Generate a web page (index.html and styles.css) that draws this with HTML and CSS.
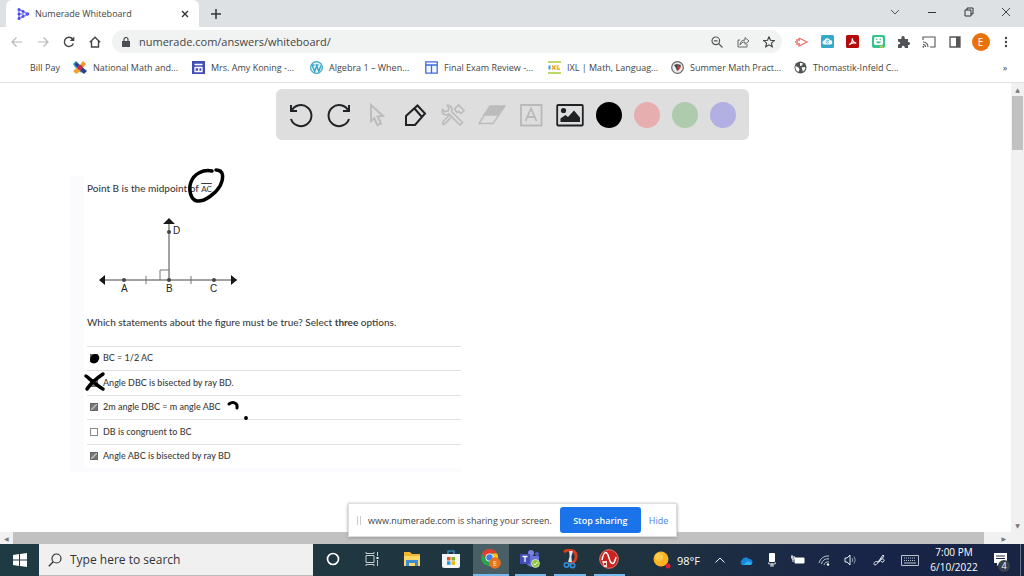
FILE: index.html
```
<!DOCTYPE html>
<html lang="en">
<head>
    <meta charset="UTF-8">
    <meta name="viewport" content="width=device-width, initial-scale=1.0">
    <title>Numerade Whiteboard</title>
    <link rel="stylesheet" href="styles.css">
</head>
<body>
    <header class="browser">
        <div class="tabs">
            <div class="tab">
                <svg width="14" height="14" viewBox="0 0 14 14"><path d="M3 2v10M3 2.500l4 2 5 2.500-5 2.500-4 2M3 7h5" fill="none" stroke="#8585f5" stroke-width="1.500"/><g fill="#5050ee"><circle cx="3" cy="2.500" r="1.500"/><circle cx="3" cy="7" r="1.500"/><circle cx="3" cy="11.500" r="1.500"/><circle cx="7" cy="4.500" r="1.400"/><circle cx="7" cy="9.500" r="1.400"/><circle cx="11.500" cy="7" r="1.700"/></g></svg>
                <span class="tab-title">Numerade Whiteboard</span>
                <button class="icon" aria-label="Close tab"><svg width="8" height="8" viewBox="0 0 8 8"><path d="M1 1l6 6M7 1L1 7" stroke="#333" stroke-width="1.4"/></svg></button>
            </div>
            <button class="icon new-tab" aria-label="New tab"><svg width="10" height="10" viewBox="0 0 10 10"><path d="M5 0v10M0 5h10" stroke="#333" stroke-width="1.5"/></svg></button>
            <div class="window-buttons">
                <button class="icon" aria-label="Search tabs"><svg width="10" height="10" viewBox="0 0 10 10"><path d="M1 3l4 4 4-4" fill="none" stroke="#555"/></svg></button>
                <button class="icon" aria-label="Minimize"><svg width="10" height="10" viewBox="0 0 10 10"><path d="M1 5.5h8" stroke="#333"/></svg></button>
                <button class="icon" aria-label="Restore"><svg width="10" height="10" viewBox="0 0 10 10"><path d="M1 3h6v6H1zM3 3V1h6v6H7" fill="none" stroke="#333"/></svg></button>
                <button class="icon" aria-label="Close"><svg width="10" height="10" viewBox="0 0 10 10"><path d="M1 1l8 8M9 1L1 9" stroke="#444"/></svg></button>
            </div>
        </div>

        <div class="toolbar">
            <div class="nav">
                <button class="icon" aria-label="Back"><svg width="12" height="12" viewBox="0 0 12 12"><path d="M11 6H1.500M5.500 1.500L1 6l4.500 4.500" fill="none" stroke="#b5b7ba" stroke-width="1.200"/></svg></button>
                <button class="icon" aria-label="Forward"><svg width="12" height="12" viewBox="0 0 12 12"><path d="M1 6h9.500M6.500 1.500L11 6l-4.500 4.500" fill="none" stroke="#b5b7ba" stroke-width="1.200"/></svg></button>
                <button class="icon" aria-label="Reload"><svg width="12" height="12" viewBox="0 0 12 12"><path d="M10.300 7.500A4.600 4.600 0 1 1 9.600 3" fill="none" stroke="#444" stroke-width="1.400"/><path d="M11.300.5v4.500H6.800z" fill="#444"/></svg></button>
                <button class="icon" aria-label="Home"><svg width="12" height="12" viewBox="0 0 12 12"><path d="M.8 6.200L6 1.200l5.200 5M2.500 5v6h7V5" fill="none" stroke="#444" stroke-width="1.400"/></svg></button>
            </div>
            <div class="address">
                <svg width="8" height="10" viewBox="0 0 8 10"><path d="M0 4h8v6H0z" fill="#4a4d51"/><path d="M2 4V2.500a2 2 0 0 1 4 0V4" fill="none" stroke="#4a4d51" stroke-width="1.200"/></svg>
                <input type="text" aria-label="Address" value="numerade.com/answers/whiteboard/">
                <div class="actions">
                    <button class="icon" aria-label="Zoom"><svg width="12" height="12" viewBox="0 0 12 12"><circle cx="4.800" cy="4.800" r="3.800" fill="none" stroke="#555" stroke-width="1.200"/><path d="M7.600 7.600L11.500 11.500M3 4.800h3.600" stroke="#555" stroke-width="1.300"/></svg></button>
                    <button class="icon" aria-label="Share"><svg width="13" height="12" viewBox="0 0 13 12"><path d="M3 4H1v7h9V8M3 9c.3-3.500 2-5 5-5V1.500L12 5 8 8.300V6C5.500 6 4 7 3 9z" fill="none" stroke="#666"/></svg></button>
                    <button class="icon" aria-label="Bookmark this page"><svg width="12" height="12" viewBox="0 0 12 12"><path d="M6 .8l1.500 3.500 3.800.3-2.900 2.500.9 3.700L6 8.800l-3.300 2 .9-3.700L.7 4.600l3.800-.3z" fill="none" stroke="#444" stroke-width="1.100"/></svg></button>
                </div>
            </div>
            <div class="extensions">
                <button class="icon" aria-label="Screencastify"><svg width="13" height="12" viewBox="0 0 13 12"><path d="M4 2l8 4-8 4V8M4 2v2M1 4h4M1 8h4M0 6h3" fill="none" stroke="#f07068" stroke-width="1.300"/></svg></button>
                <button class="icon" aria-label="Cloud"><svg width="13" height="13" viewBox="0 0 13 13"><rect width="13" height="13" rx="1.500" fill="#36a9c9"/><path d="M3.500 9.500a2 2 0 0 1-.2-4A3 3 0 0 1 9 5a2.300 2.300 0 0 1 .7 4.500z" fill="#fff"/><path d="M7.800 7.500a1.500 1.500 0 1 1 0-1.500H6" fill="none" stroke="#36a9c9" stroke-width=".8"/></svg></button>
                <button class="icon" aria-label="Acrobat"><svg width="13" height="13" viewBox="0 0 13 13"><rect width="13" height="13" rx="1.500" fill="#b30b0b"/><path d="M3 9.800c2-.8 3.500-3.500 3.300-6.500.3 3 2 4.500 4 4.800C7.500 7.500 5 8 3 9.800z" fill="none" stroke="#fff" stroke-width="1.100"/></svg></button>
                <button class="icon" aria-label="Bitmoji"><svg width="13" height="13" viewBox="0 0 13 13"><rect width="13" height="13" rx="2" fill="#35c48b"/><rect x="2" y="2" width="9" height="8" rx="1.500" fill="#fff"/><path d="M4.800 3.500v1.500M8.200 3.500v1.500" stroke="#35a878"/><path d="M4 6.500h5c-.5 2.500-4.500 2.500-5 0z" fill="#35c48b"/><path d="M7 12l3-2 1 3z" fill="#f1bf35"/></svg></button>
                <button class="icon" aria-label="Extensions"><svg width="13" height="13" viewBox="0 0 13 13"><path d="M1 4h3.500C3.500 0 8.500 0 7.700 4H11v3c3 0 3 3.200 0 3.200V13H7.800c0-3-3.200-3-3.200 0H1V9.500c3 0 3-2.800 0-2.800z" fill="#505357"/></svg></button>
                <button class="icon" aria-label="Cast"><svg width="14" height="12" viewBox="0 0 14 12"><path d="M1 4V1h12v10H8M1 6c3 0 5 2 5 5M1 8.500c1.500 0 2.500 1 2.500 2.500" fill="none" stroke="#555" stroke-width="1.100"/><circle cx="1.300" cy="10.800" r=".9" fill="#555"/></svg></button>
                <button class="icon" aria-label="Side panel"><svg width="12" height="12" viewBox="0 0 12 12"><path d="M1 1h10v10H1z" fill="none" stroke="#555" stroke-width="1.300"/><path d="M7 1h4v10H7z" fill="#555"/></svg></button>
                <button class="icon profile" aria-label="Profile">E</button>
                <button class="icon" aria-label="Menu"><svg width="4" height="12" viewBox="0 0 4 12" fill="#444"><circle cx="2" cy="2" r="1.200"/><circle cx="2" cy="6" r="1.200"/><circle cx="2" cy="10" r="1.200"/></svg></button>
            </div>
        </div>

        <nav class="bookmarks">
            <a href="#">Bill Pay</a>
            <a href="#"><svg width="14" height="13" viewBox="0 0 14 13"><path d="M0 3l3-3 4 4 3 8-3-1-5-5z" fill="#2b91c7"/><path d="M7 4l3-4 3 3-4 5z" fill="#f59a23"/><path d="M0 10l5-4 3 4-5 3z" fill="#f2a32c"/><path d="M3 1l11 9-3 3L2 4z" fill="#2a3f90"/><circle cx="7" cy="6.500" r="2.500" fill="#c12c55"/></svg>National Math and...</a>
            <a href="#"><svg width="13" height="13" viewBox="0 0 13 13"><rect width="13" height="13" fill="#3f4db5"/><path d="M2.500 3.500h8M3 6.500h7M3 6v4.500h7V6M6.800 6v4.500" fill="none" stroke="#fff" stroke-width="1.300"/></svg>Mrs. Amy Koning -...</a>
            <a href="#"><svg width="13" height="13" viewBox="0 0 13 13"><circle cx="6.500" cy="6.500" r="5.900" fill="#e3f4f9" stroke="#3aa5c8" stroke-width="1.200"/><path d="M2 4l2.700 6.500 2-5.500 2.200 5.500 2-6M1.500 4h3M5.500 4h3" fill="none" stroke="#3aa5c8" stroke-width="1.400"/></svg>Algebra 1 – When...</a>
            <a href="#"><svg width="13" height="13" viewBox="0 0 13 13"><path d="M.8.800h11.400v11.400H.8zM1 4h11M6.500 4v8" fill="#f4f7ff" stroke="#3c6ce0" stroke-width="1.300"/></svg>Final Exam Review -...</a>
            <a href="#"><svg width="13" height="13" viewBox="0 0 13 13"><path d="M0 1h13M0 12h13" stroke="#a5ce39" stroke-width="1.400"/><path d="M1.500 4.500v4" stroke="#2b9fd6" stroke-width="2"/><path d="M4 4.500l3.500 4M7.500 4.500L4 8.500" stroke="#f2a51d" stroke-width="1.500"/><path d="M9.500 4v4.200H12" fill="none" stroke="#efbf17" stroke-width="1.700"/></svg>IXL | Math, Languag...</a>
            <a href="#"><svg width="13" height="13" viewBox="0 0 13 13"><circle cx="6.500" cy="6.500" r="5.800" fill="#eee" stroke="#666" stroke-width="1.200"/><path d="M3 4l3-1 4 1-1 3-3 3-1-3z" fill="#444"/><path d="M6 4l4 2-3 4z" fill="#c04747"/></svg>Summer Math Pract...</a>
            <a href="#"><svg width="13" height="13" viewBox="0 0 13 13"><circle cx="6.500" cy="6.500" r="6" fill="#505357"/><path d="M1.500 5l3 1.500 1 2-1 2.500C2 10 1 7.500 1.500 5zM6 2l3 .3-1 2.200-2 .5zM7.500 6.500l3.500-.5.3 2-2.300 2.700z" fill="#fff"/></svg>Thomastik-Infeld C...</a>
            <button class="icon more" aria-label="More bookmarks">»</button>
        </nav>
    </header>

    <main class="page">
        <div class="content">
            <div class="tools">
                <button class="icon" aria-label="Undo"><svg width="26" height="26" viewBox="0 0 26 26"><path d="M3 3v6h6M3.500 9A10.500 10.500 0 1 1 3 17" fill="none" stroke="#202326" stroke-width="2"/></svg></button>
                <button class="icon" aria-label="Redo"><svg width="26" height="26" viewBox="0 0 26 26"><path d="M23 3v6h-6M22.500 9A10.500 10.500 0 1 0 23 17" fill="none" stroke="#202326" stroke-width="2"/></svg></button>
                <button class="icon" aria-label="Select"><svg width="26" height="26" viewBox="0 0 26 26"><path d="M7 3l12 11-5.500.5 3.500 7-3.500 1.700-3.300-7L7 19z" fill="none" stroke="#bcbcbc" stroke-width="2"/></svg></button>
                <button class="icon" aria-label="Pen"><svg width="26" height="26" viewBox="0 0 26 26"><path d="M4 23v-9L15.500 3.500l7.500 8L13 23zM12.500 6.500l7 8" fill="none" stroke="#202326" stroke-width="2"/></svg></button>
                <button class="icon" aria-label="Shapes"><svg width="26" height="26" viewBox="0 0 26 26"><path d="M7 3.500L9 6 8 9 5 9.500 2.500 7.500C1 12 6 14 9 12l11 11 2.500-2.500L11.500 9.500C13 6 10.500 3 7 3.500zM14.500 7l4-4 5.500 5.500-3 3-2-2-2 1zM12 14.500L4 22.500M10 12.500l-7 7 0 3.500" fill="none" stroke="#bcbcbc" stroke-width="1.700"/></svg></button>
                <button class="icon" aria-label="Eraser"><svg width="28" height="26" viewBox="0 0 28 26"><path d="M12 4h15l-7 9H5z" fill="#bcbcbc"/><path d="M12 4h15L15 21.500H1zM5 13h15" fill="none" stroke="#bcbcbc" stroke-width="1.500"/></svg></button>
                <button class="icon" aria-label="Text"><svg width="26" height="26" viewBox="0 0 26 26"><path d="M3 3h20.500v20.500H3zM7.500 19L13 6.500 18.500 19M9.500 15h7" fill="none" stroke="#b9b9b9" stroke-width="1.800"/></svg></button>
                <button class="icon" aria-label="Image"><svg width="28" height="26" viewBox="0 0 28 26"><rect x="1.200" y="3" width="25.600" height="20.500" rx="1" fill="none" stroke="#202326" stroke-width="1.800"/><circle cx="7.500" cy="8.500" r="2.600" fill="#202326"/><path d="M4.500 20v-3.500l5-3.500 2.500 2 6-6.500 6 7V20z" fill="#202326"/></svg></button>
                <button class="swatch black" aria-label="Black"></button>
                <button class="swatch red" aria-label="Red"></button>
                <button class="swatch green" aria-label="Green"></button>
                <button class="swatch blue" aria-label="Blue"></button>
            </div>

            <section class="question">
                <p>Point B is the midpoint of <span class="segment">AC</span></p>
                <svg class="figure" width="150" height="84" viewBox="0 0 150 84">
                    <path d="M14 67h136M82 67V8" stroke="#444" fill="none"/>
                    <path d="M73 67V57h9M59 63v8M104 63v8" stroke="#777" fill="none"/>
                    <path d="M12 67l6-5v10zM150 67l-6-5v10zM82 5l-6 6h12z" fill="#181818"/>
                    <g fill="#444"><circle cx="37" cy="67" r="2"/><circle cx="82" cy="67" r="2"/><circle cx="127" cy="67" r="2"/><circle cx="82" cy="19" r="2"/></g>
                    <g class="labels"><text x="34" y="79">A</text><text x="79" y="79">B</text><text x="123" y="79">C</text><text x="86" y="21">D</text></g>
                </svg>
                <p>Which statements about the figure must be true? Select <b>three</b> options.</p>
                <ul class="options">
                    <li><label><input type="checkbox" checked>BC = 1/2 AC</label></li>
                    <li><label><input type="checkbox" checked>Angle DBC is bisected by ray BD.</label></li>
                    <li><label><input type="checkbox" checked>2m angle DBC = m angle ABC</label></li>
                    <li><label><input type="checkbox">DB is congruent to BC</label></li>
                    <li><label><input type="checkbox" checked>Angle ABC is bisected by ray BD</label></li>
                </ul>
                <!-- pen strokes -->
                <svg class="ink" width="391" height="310" viewBox="70 160 391 310" fill="none" stroke="#000" stroke-width="3.500" stroke-linecap="round">
                    <path d="M212 171c-9-2-18 3-21 11-3 8 0 18 6 19 8 1 19-8 23-15 4-8 4-16-4-16"/>
                    <path d="M86 376c5 4 12 10 17 13M103 374c-6 4-12 9-16 15"/>
                    <path d="M91 360c0-3 2-5 4-5 4 0 4 4 2 6-2 2-6 2-6-1z" fill="#000" stroke-width="2"/>
                    <path d="M229 404c4-3 9-1 8 4" stroke-width="3"/>
                    <circle cx="246" cy="418" r="1.200" stroke-width="1.500" fill="#000"/>
                </svg>
            </section>
        </div>
        <div class="scroll-y"><span>▲</span><i></i><span>▼</span></div>
        <div class="scroll-x"><span>◀</span><i></i><span>▶</span></div>

        <div class="sharing">
            <span class="grip"></span>
            <span>www.numerade.com is sharing your screen.</span>
            <button class="stop">Stop sharing</button>
            <a href="#">Hide</a>
        </div>
    </main>

    <footer class="taskbar">
        <button class="icon start" aria-label="Start"><svg width="14" height="14" viewBox="0 0 14 14"><path d="M0 2l6-.9v5.500H0zM7 1l7-1v6.600H7zM0 7.400h6v5.500L0 12zM7 7.400h7V14l-7-1z" fill="#fff"/></svg></button>
        <label class="search">
            <svg width="14" height="14" viewBox="0 0 14 14"><circle cx="8.500" cy="5.500" r="4.500" fill="none" stroke="#333" stroke-width="1.200"/><path d="M5.200 8.800L.8 13.200" stroke="#333" stroke-width="1.300"/></svg>
            <input type="text" placeholder="Type here to search" aria-label="Search">
        </label>
        <div class="apps">
            <button class="icon" aria-label="Cortana"><svg width="14" height="14" viewBox="0 0 14 14"><circle cx="7" cy="7" r="5.500" fill="none" stroke="#fff" stroke-width="1.700"/></svg></button>
            <button class="icon" aria-label="Task view"><svg width="15" height="14" viewBox="0 0 15 14"><path d="M1 3.500h8v7H1zM1 0v1.500h8V0M1 14v-1.500h8V14M12.500 0v4M12.500 8v6" fill="none" stroke="#c4cccf"/><path d="M11.500 5h2v2h-2z" fill="#fff"/></svg></button>
            <button class="icon" aria-label="File Explorer"><svg width="18" height="16" viewBox="0 0 18 16"><path d="M1 1h6l2 2h8v12H1z" fill="#f3b72f"/><path d="M1 5h16v10H1z" fill="#fbd868"/><path d="M3 15V9h12v6h-3v-3H6v3z" fill="#3f8bd3"/></svg></button>
            <button class="icon" aria-label="Store"><svg width="18" height="18" viewBox="0 0 18 18"><path d="M6 4V1h6v3" fill="none" stroke="#37a6dc" stroke-width="1.200"/><path d="M0 4h18v12q0 2-2 2H2q-2 0-2-2z" fill="#f4f5f6"/><path d="M5 7h3.500v3.500H5z" fill="#ea4e25"/><path d="M9.500 7H13v3.500H9.500z" fill="#78b41f"/><path d="M5 11.300h3.500v3.500H5z" fill="#1c9fe5"/><path d="M9.500 11.300H13v3.500H9.500z" fill="#f4b400"/></svg></button>
            <button class="icon open active" aria-label="Chrome"><svg width="20" height="20" viewBox="0 0 20 20"><circle cx="8.500" cy="8.500" r="8.500" fill="#2ba24c"/><path d="M1 4.500A8.500 8.500 0 0 1 16 4.500H8.500L5 10z" fill="#e33b2e"/><path d="M16 4.500A8.500 8.500 0 0 1 8 17l4.500-7-1-5.500z" fill="#fbc116"/><circle cx="8.500" cy="8.500" r="4" fill="#fff"/><circle cx="8.500" cy="8.500" r="3.200" fill="#3d7de8"/><circle cx="14" cy="14" r="5.800" fill="#e8711c"/><text x="12" y="17" class="badge-letter">E</text></svg></button>
            <button class="icon open" aria-label="Teams"><svg width="20" height="18" viewBox="0 0 20 18"><circle cx="11" cy="3" r="3" fill="#7b83eb"/><circle cx="17" cy="4" r="2" fill="#5059c9"/><path d="M6 6h13v6q-2 5-6 5-7 0-7-7z" fill="#6b72d8"/><path d="M0 4h10v10H0z" fill="#454eb8"/><path d="M2.500 6.500h5M5 6.500v5.500" stroke="#fff" stroke-width="1.300"/><circle cx="15.500" cy="13.500" r="4" fill="#8cc63e" stroke="#fff" stroke-width=".6"/><path d="M13.500 13.500l1.500 1.500 2.500-3" fill="none" stroke="#fff"/></svg></button>
            <button class="icon open" aria-label="Snip"><svg width="18" height="20" viewBox="0 0 18 20"><path d="M3 3c5-4 13-1 12 5 0 4-3 6-7 7" fill="none" stroke="#cf3e21" stroke-width="3"/><path d="M9 2l1 11M11 2L8 13" stroke="#e1e5e8" stroke-width="1.800"/><circle cx="5.500" cy="16" r="2.200" fill="none" stroke="#3190d8" stroke-width="1.600"/><circle cx="11.500" cy="16.500" r="2.200" fill="none" stroke="#3190d8" stroke-width="1.600"/></svg></button>
            <button class="icon open" aria-label="Graph"><svg width="20" height="20" viewBox="0 0 20 20"><circle cx="10" cy="10" r="9.300" fill="#cc2222" stroke="#ed7566"/><path d="M3 11C5 1 8 2 10 9s5 8 7-1" fill="none" stroke="#fff" stroke-width="1.500"/><path d="M3 12h5v6H5z" fill="#f0dcd7"/><path d="M5 14h2v2H5z" fill="#a23527"/></svg></button>
        </div>
        <div class="weather"><svg width="18" height="18" viewBox="0 0 18 18"><circle cx="8" cy="8" r="7.500" fill="#fbb321"/><circle cx="6" cy="6" r="4" fill="#fdcb4c"/><circle cx="15" cy="15" r="2.500" fill="#dc1c36"/></svg>98°F</div>
        <div class="tray">
            <button class="icon" aria-label="Show hidden icons"><svg width="10" height="6" viewBox="0 0 10 6"><path d="M.5 5.500L5 1l4.500 4.500" fill="none" stroke="#fff"/></svg></button>
            <button class="icon" aria-label="OneDrive"><svg width="14" height="9" viewBox="0 0 14 9"><path d="M3 9a3 3 0 0 1 0-5 4 4 0 0 1 7-1 3 3 0 0 1 1 6z" fill="#1685dc"/><path d="M4 9l5-4 4 2-1 2z" fill="#2fb0ef"/></svg></button>
            <button class="icon" aria-label="Microphone"><svg width="10" height="14" viewBox="0 0 10 14"><rect x="2" width="6" height="9" rx="1" fill="#fff"/><path d="M1 9q4 3 8 0v2q-4 2-8 0z" fill="#a9b2bc"/><path d="M5 10v3M3 13h4" stroke="#dce1e5"/></svg></button>
            <button class="icon" aria-label="Battery"><svg width="14" height="10" viewBox="0 0 14 10"><path d="M4 3h9v5H4z" fill="#fff" stroke="#fff"/><path d="M0 2h4M1 0v4q3 1 3-2M2 4v3" fill="none" stroke="#fff"/></svg></button>
            <button class="icon" aria-label="Wi-Fi"><svg width="12" height="12" viewBox="0 0 12 12"><path d="M1 9A9 9 0 0 1 11 2M3.500 10A6 6 0 0 1 11 5M6 11a4 4 0 0 1 5-3" fill="none" stroke="#bcc6cf"/><circle cx="10" cy="10.500" r="1.200" fill="#fff"/></svg></button>
            <button class="icon" aria-label="Volume"><svg width="13" height="12" viewBox="0 0 13 12"><path d="M1 4h2l3-3v10L3 8H1z" fill="none" stroke="#e9edf1"/><path d="M8 4q1.500 2 0 4M10 2.500q2.500 3.500 0 7" fill="none" stroke="#8999a9"/></svg></button>
            <button class="icon pen" aria-label="Pen workspace"><svg width="12" height="12" viewBox="0 0 12 12"><path d="M5 8l5-7 1 1-5 6zM5 8C1 6 0 11 2 11s3-3 5-5 5-1 4 1-3 1-3 0" fill="none" stroke="#dfe5ea"/></svg></button>
            <button class="icon keyboard" aria-label="Keyboard"><svg width="18" height="11" viewBox="0 0 18 11"><path d="M.5.500h17v10H.5zM3 8h12" fill="none" stroke="#b7c2cc"/><path d="M3 3h12M3 5.500h12" stroke="#b7c2cc" stroke-dasharray="1 1"/></svg></button>
        </div>
        <div class="clock">7:00 PM<br>6/10/2022</div>
        <button class="icon notifications" aria-label="Notifications"><svg width="14" height="14" viewBox="0 0 14 14"><path d="M0 0h13v10H6l-3 3v-3H0z" fill="#fff"/><path d="M2 3h9M2 5.500h9" stroke="#222c44"/></svg><span>4</span></button>
    </footer>
</body>
</html>
```

FILE: styles.css
```
* { box-sizing: border-box; }
body { margin: 0; height: 100vh; display: flex; flex-direction: column; overflow: hidden; font-family: "Open Sans", "Noto Sans", sans-serif; font-size: 10px; color: #444; background: white; }
svg { display: block; flex: none; }
a { color: inherit; text-decoration: none; }
p { margin: 0; }
.icon { display: flex; align-items: center; justify-content: center; padding: 0; border: 0; background: none; font: inherit; color: inherit; }

/* browser chrome */
.browser { border-bottom: 1px solid #dfe0e1; }
.tabs { display: flex; height: 27px; padding-left: 6px; background: #dee1e3; }
.tab { display: flex; align-items: center; gap: 5px; width: 193px; padding: 0 10px; background: white; border-radius: 6px 6px 0 0; font-size: 9px; }
.tab-title { flex: 1; }
.new-tab { width: 34px; }
.window-buttons { display: flex; margin-left: auto; padding-bottom: 3px; }
.window-buttons .icon { width: 37px; }
.toolbar { display: flex; align-items: center; height: 29px; }
.nav { display: flex; width: 112px; padding: 0 4px; }
.nav .icon { flex: 1; }
.address { flex: 1; display: flex; align-items: center; gap: 9px; height: 23px; padding: 0 0 0 10px; background: #f1f3f3; border-radius: 12px; }
.address input { flex: 1; padding: 0; border: 0; background: none; font: inherit; font-size: 11px; color: #444; }
.actions { display: flex; }
.actions .icon { width: 26px; }
.extensions { display: flex; width: 242px; padding: 0 5px 0 7px; }
.extensions .icon { flex: 1; }
.extensions .profile { flex: none; width: 18px; height: 18px; margin: 0 4px; border-radius: 50%; background: #e8710a; color: white; }
.bookmarks { display: grid; grid-template-columns: 43px 119px 118px 115px 123px 123px 123px 1fr 20px; height: 26px; padding: 0 9px 4px 30px; align-items: center; white-space: nowrap; font-size: 9px; }
.bookmarks a { display: flex; align-items: center; gap: 6px; }

/* whiteboard page */
.page { position: relative; flex: 1; display: grid; grid-template-columns: 1fr 13px; grid-template-rows: 1fr 12px; min-height: 0; }
.content { grid-area: 1 / 1 / 2 / 3; overflow: hidden; }
.tools { display: flex; align-items: center; justify-content: space-between; width: 473px; height: 51px; margin: 6px auto 0; padding: 0 12px; border-radius: 6px; background: #dedede; }
.swatch { width: 26px; height: 26px; padding: 0; border: 0; border-radius: 50%; }
.black { background: black; }
.red { background: #e7aeb0; }
.green { background: #aecbae; }
.blue { background: #b2afe2; }
.question { position: relative; width: 391px; margin: 36px 0 0 70px; padding: 5px 0 0 3px; border-left: 14px solid #fbfbfe; border-bottom: 4px solid #fbfbfe; font-family: Lato, sans-serif; font-size: 10px; font-weight: 500; line-height: 14px; color: #3c3c3c; }
.segment { font-size: 8px; text-decoration: overline; }
.figure { margin: 17px 0 18px; }
.labels { font: 10px "Liberation Sans", sans-serif; fill: #222; }
.options { margin: 17px 0 0; padding: 0; list-style: none; font-size: 9px; }
.options li { border-top: 1px solid #e0e0e0; }
.options label { display: flex; align-items: center; gap: 5px; height: 23px; padding: 0 0 1px 3px; }
.options li:nth-child(even) label { height: 24px; }
.options input { appearance: none; width: 8px; height: 8px; margin: 0; border: 1px solid #888; background: white; }
.options input:checked { background: linear-gradient(135deg, #777 40%, #ddd 45%, #777 65%); border-color: #666; }
.ink { position: absolute; left: -14px; top: -16px; }

.scroll-y, .scroll-x { display: flex; align-items: center; justify-content: space-between; background: #f1f1f1; font: 6px "DejaVu Sans", sans-serif; color: #777; }
.scroll-y { grid-area: 1 / 2; flex-direction: column; padding: 3px 0; }
.scroll-y i { width: 11px; height: 54px; margin: 3px 0 auto; background: #c1c1c1; }
.scroll-x { grid-column: 1 / 3; padding: 0 18px 0 4px; }
.scroll-x i { flex: 1; height: 12px; margin: 0 17px 0 4px; background: #c1c1c1; }

.sharing { position: absolute; left: 348px; bottom: 7px; display: flex; align-items: center; height: 34px; padding: 0 8px; background: white; border: 1px solid #ddd; box-shadow: 0 1px 3px #999; white-space: nowrap; font-size: 9px; }
.grip { width: 4px; height: 9px; margin-right: 7px; border: solid #ccc; border-width: 0 1px; }
.sharing a { color: #4c82dd; }
.stop { width: 81px; height: 26px; margin: 0 8px; padding: 0; border: 0; border-radius: 3px; background: #1a73e8; color: white; font: inherit; font-weight: 600; }

/* taskbar */
.taskbar { display: flex; height: 32px; color: white; background: linear-gradient(90deg, #1e3a42, #20343f 60%, #182448 85%, #192443); }
.start { width: 39px; }
.search { display: flex; align-items: center; gap: 8px; width: 274px; padding-left: 9px; background: #f0f0f0; border-bottom: 1px solid #bbb; }
.search input { flex: 1; min-width: 0; padding: 0; border: 0; background: none; font: inherit; font-size: 12px; }
.search input::placeholder { color: #333; }
.apps { display: grid; grid-template-columns: repeat(8, 1fr); width: 316px; }
.apps .icon { border-bottom: 2px solid transparent; }
.apps .open { margin: 0 4px; border-color: #76b9ed; }
.apps .active { margin: 0 2px; background-color: #4a5e66; }
.badge-letter { font-size: 7px; fill: white; }
.weather { display: flex; align-items: center; gap: 6px; width: 78px; padding-left: 24px; font-size: 11px; white-space: nowrap; }
.tray { display: flex; }
.tray .icon { width: 26px; }
.tray .pen { width: 31px; }
.tray .keyboard { width: 32px; }
.clock { width: 56px; padding-top: 1px; text-align: center; font-size: 10px; line-height: 15px; }
.notifications { position: relative; flex: 1; margin-right: 3px; border-right: 1px solid #68738b; }
.notifications span { position: absolute; right: 10px; bottom: 4px; width: 12px; height: 12px; border-radius: 50%; background: #3c4048; font-size: 9px; line-height: 12px; }
```
